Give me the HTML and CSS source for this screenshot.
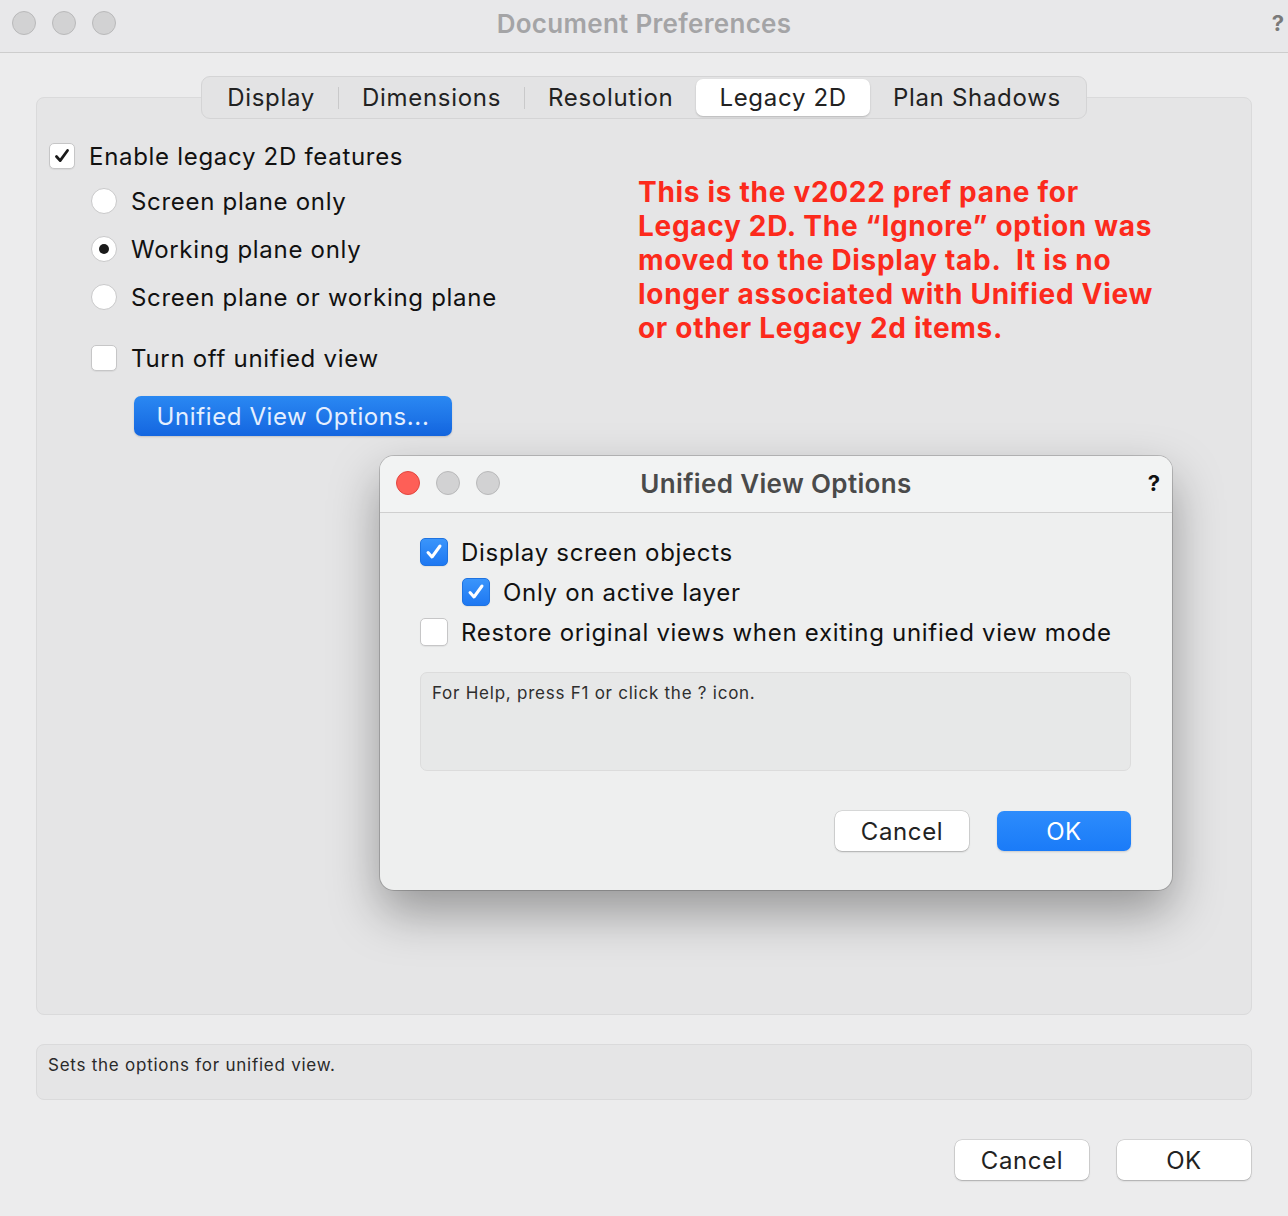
FILE: index.html
```html
<!DOCTYPE html>
<html lang="en">
<head>
  <meta charset="UTF-8">
  <title>Document Preferences</title>
  <link rel="stylesheet" href="styles.css">
</head>
<body>
  <!-- Window title bar -->
  <div class="titlebar">
    <div class="lights">
      <span class="light"></span><span class="light"></span><span class="light"></span>
    </div>
    <div class="title">Document Preferences</div>
    <div class="help">?</div>
  </div>

  <div class="content">
    <div class="tabs">
      <div class="tab">Display</div>
      <span class="sep"></span>
      <div class="tab">Dimensions</div>
      <span class="sep"></span>
      <div class="tab">Resolution</div>
      <div class="tab active">Legacy 2D</div>
      <div class="tab">Plan Shadows</div>
    </div>

    <div class="panel">
      <div class="options">
        <div class="row first">
          <span class="check on"><svg viewBox="0 0 26 26"><path d="M7 13.5l4 4.5 8-11" /></svg></span>
          <span class="label">Enable legacy 2D features</span>
        </div>
        <div class="indent">
          <div class="row">
            <span class="radio"></span>
            <span class="label">Screen plane only</span>
          </div>
          <div class="row">
            <span class="radio on"></span>
            <span class="label">Working plane only</span>
          </div>
          <div class="row">
            <span class="radio"></span>
            <span class="label">Screen plane or working plane</span>
          </div>
          <div class="row gap">
            <span class="check"></span>
            <span class="label">Turn off unified view</span>
          </div>
          <button class="btn blue wide">Unified View Options...</button>
        </div>
      </div>
      <div class="note">
        This is the v2022 pref pane for<br>
        Legacy 2D. The “Ignore” option was<br>
        moved to the Display tab.&nbsp; It is no<br>
        longer associated with Unified View<br>
        or other Legacy 2d items.
      </div>
    </div>

    <div class="status">Sets the options for unified view.</div>

    <div class="actions">
      <button class="btn">Cancel</button>
      <button class="btn">OK</button>
    </div>
  </div>

  <!-- Sub dialog over the window -->
  <div class="dialog">
    <div class="titlebar small">
      <div class="lights">
        <span class="light red"></span><span class="light"></span><span class="light"></span>
      </div>
      <div class="title dark">Unified View Options</div>
      <div class="help black">?</div>
    </div>
    <div class="dialog-body">
      <div class="drow">
        <span class="check blue-on"><svg viewBox="0 0 26 26"><path d="M7 13.5l4 4.5 8-11" /></svg></span>
        <span class="label">Display screen objects</span>
      </div>
      <div class="drow sub">
        <span class="check blue-on"><svg viewBox="0 0 26 26"><path d="M7 13.5l4 4.5 8-11" /></svg></span>
        <span class="label">Only on active layer</span>
      </div>
      <div class="drow">
        <span class="check"></span>
        <span class="label">Restore original views when exiting unified view mode</span>
      </div>
      <div class="helpbox">For Help, press F1 or click the ? icon.</div>
      <div class="actions inner">
        <button class="btn">Cancel</button>
        <button class="btn blue">OK</button>
      </div>
    </div>
  </div>
</body>
</html>
```

FILE: styles.css
```css
body {
  margin: 0;
  width: 1288px;
  height: 1216px;
  overflow: hidden;
  background: #ececed;
  font-family: Inter, "Noto Sans", sans-serif;
  color: #1c1c1c;
  position: relative;
}
.titlebar {
  box-sizing: border-box;
  height: 53px;
  padding-bottom: 6px;
  border-bottom: 1px solid #cdcdcd;
  background: #e8e8ea;
  display: grid;
  grid-template-columns: 1fr auto 1fr;
  align-items: center;
}
.lights {
  display: flex;
  gap: 16px;
  padding-left: 12px;
}
.light {
  width: 22px;
  height: 22px;
  border-radius: 50%;
  background: #d2d2d3;
  border: 1px solid #b9b9ba;
}
.light.red {
  background: #fe5f57;
  border-color: #e2463f;
}
.title {
  font-size: 26px;
  font-weight: 600;
  letter-spacing: 0.3px;
  color: #a4a4a6;
}
.title.dark {
  color: #4a4a4a;
  letter-spacing: 0.35px;
}
.help {
  justify-self: end;
  padding-right: 4px;
  font-size: 22px;
  font-weight: 700;
  color: #7a7a7a;
}
.help.black {
  color: #111;
  padding-right: 12px;
}
.content {
  padding: 0 36px;
}
.tabs {
  position: relative;
  z-index: 1;
  margin: 23px auto 0;
  width: max-content;
  height: 37px;
  display: flex;
  align-items: center;
  padding: 2px;
  background: #e3e3e4;
  border: 1px solid #d4d4d5;
  border-radius: 9px;
}
.tab {
  height: 37px;
  line-height: 37px;
  padding: 0 23px;
  font-size: 24px;
  letter-spacing: 0.7px;
  color: #222;
  border-radius: 7px;
}
.tab.active {
  background: #fff;
  box-shadow: 0 1px 2px rgba(0, 0, 0, 0.2);
}
.sep {
  width: 1px;
  height: 22px;
  background: #c9c9ca;
}
.panel {
  margin-top: -22px;
  height: 879px;
  padding: 37px 12px 0;
  background: #e5e5e6;
  border: 1px solid #dadadb;
  border-radius: 8px;
  display: flex;
}
.options {
  width: 589px;
}
.row {
  height: 48px;
  display: flex;
  align-items: center;
  gap: 14px;
}
.row.first {
  height: 42px;
}
.row.gap {
  margin-top: 13px;
}
.indent {
  padding-left: 42px;
}
.label {
  font-size: 24px;
  letter-spacing: 0.7px;
  color: #111;
}
.check {
  width: 24px;
  height: 24px;
  flex: none;
  background: #fff;
  border: 1px solid #c6c6c7;
  border-radius: 5px;
  box-shadow: 0 1px 1px rgba(0, 0, 0, 0.06);
}
.check svg {
  width: 24px;
  height: 24px;
  display: block;
}
.check path {
  fill: none;
  stroke: #1a1a1a;
  stroke-width: 3;
  stroke-linecap: round;
  stroke-linejoin: round;
}
.check.blue-on {
  background: linear-gradient(#3a95fb, #1e78f2);
  border-color: #1f73e0;
}
.check.blue-on path {
  stroke: #fff;
}
.radio {
  width: 24px;
  height: 24px;
  flex: none;
  border-radius: 50%;
  background: #fff;
  border: 1px solid #c9c9ca;
  display: flex;
  align-items: center;
  justify-content: center;
}
.radio.on::after {
  content: "";
  width: 10px;
  height: 10px;
  border-radius: 50%;
  background: #1a1a1a;
}
.btn {
  font-family: inherit;
  font-size: 24px;
  letter-spacing: 0.6px;
  color: #222;
  width: 134px;
  height: 40px;
  background: #fff;
  border: none;
  border-radius: 7px;
  box-shadow: 0 0 0 0.5px rgba(0, 0, 0, 0.18), 0 1px 2px rgba(0, 0, 0, 0.2);
}
.btn.blue {
  color: #fff;
  background: linear-gradient(#2d8cfc, #1a7bf8);
  box-shadow: 0 1px 2px rgba(0, 0, 0, 0.15);
}
.btn.wide {
  width: 318px;
  margin-top: 14px;
  margin-left: 43px;
  color: #e4efff;
  background: linear-gradient(#2a88f2, #1466e0);
}
.note {
  margin-top: 40px;
  font-size: 28px;
  line-height: 34px;
  letter-spacing: 0.7px;
  font-weight: 700;
  color: #fc2a1c;
  white-space: nowrap;
}
.status {
  margin-top: 29px;
  height: 44px;
  padding: 10px 11px 0;
  font-size: 17px;
  letter-spacing: 0.75px;
  color: #2a2a2a;
  background: #e5e5e6;
  border: 1px solid #dadadb;
  border-radius: 8px;
}
.actions {
  margin-top: 40px;
  display: flex;
  justify-content: flex-end;
  gap: 28px;
  padding-right: 1px;
}
.dialog {
  position: absolute;
  left: 380px;
  top: 456px;
  width: 792px;
  height: 434px;
  background: #eeefef;
  border-radius: 14px;
  overflow: hidden;
  box-shadow: 0 0 0 1px rgba(0, 0, 0, 0.18), 0 22px 50px rgba(0, 0, 0, 0.35);
}
.titlebar.small {
  height: 57px;
  padding-bottom: 2px;
  background: #f2f3f3;
  border-bottom-color: #cfcfcf;
}
.titlebar.small .lights {
  padding-left: 16px;
}
.dialog-body {
  padding: 19px 41px 0 40px;
}
.drow {
  height: 40px;
  display: flex;
  align-items: center;
  gap: 13px;
}
.drow.sub {
  padding-left: 42px;
}
.drow .check {
  width: 26px;
  height: 26px;
}
.drow .check svg {
  width: 26px;
  height: 26px;
}
.helpbox {
  margin-top: 20px;
  height: 87px;
  padding: 10px 11px 0;
  font-size: 17px;
  letter-spacing: 0.75px;
  color: #2e2e2e;
  background: #e7e8e8;
  border: 1px solid #dcdcdc;
  border-radius: 7px;
}
.actions.inner {
  margin-top: 40px;
  padding-right: 0;
}
```
